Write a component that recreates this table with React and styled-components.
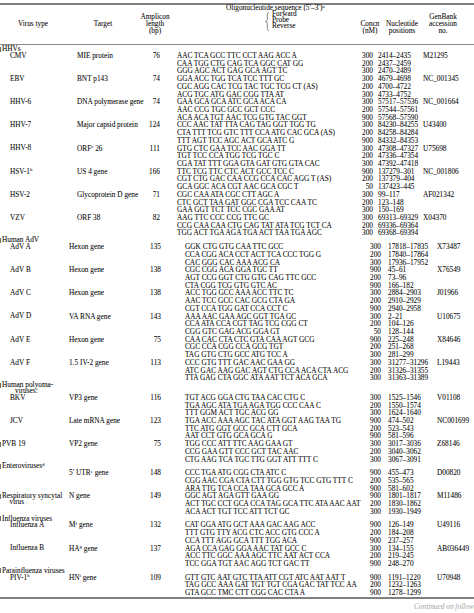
import React from "react";
import styled, { createGlobalStyle, css } from "styled-components";

const Global = createGlobalStyle`
  html, body { margin: 0; padding: 0; background: #fff; }
  body {
    width: 474px;
    height: 613px;
    overflow: hidden;
    font-family: "Liberation Serif", "Times New Roman", serif;
    color: #202020;
  }
`;

const Page = styled.div`
  width: 474px;
  padding-top: 3px;
  font-size: 7.3px;
  white-space: nowrap;
  text-shadow: 0 0 0.4px rgba(0, 0, 0, 0.35);
`;

const TableFrame = styled.div`
  border-top: 2px solid #808080;
  border-bottom: 2px solid #808080;
`;

const Head = styled.div`
  box-sizing: border-box;
  display: grid;
  grid-template-columns: 66px 74px 30px 190px 20px 44px 38px 1fr;
  height: 39.5px;
  padding-bottom: 9px;
  align-items: end;
  border-bottom: 1px solid #8c8c8c;
`;

const HeadCell = styled.div`
  text-align: center;
  line-height: 7.3px;
  ${(p) => p.$single && css`margin-bottom: 7.3px;`}
`;

const OligoCell = styled.div`
  align-self: start;
  display: flex;
  flex-direction: column;
`;

const OligoTitle = styled.div`
  line-height: 6px;
  padding-left: 56px;
`;

const BraceRow = styled.div`
  display: flex;
  align-items: flex-start;
  padding-left: 95px;
  margin-top: -0.5px;
`;

const BraceList = styled.div`
  line-height: 6.4px;
  padding-left: 2px;
`;

const Body = styled.div`
  padding-top: 1.5px;
`;

const Tick = styled.span`
  display: inline-block;
  width: 1px;
  height: 5px;
  margin-right: 1px;
  background: #6f6f6f;
  vertical-align: -0.5px;
`;

const GroupLabel = styled.div`
  line-height: 5.9px;
`;

const Sub = styled.div`
  padding-left: ${(p) => p.$indent}px;
`;

const Row = styled.div`
  display: grid;
  line-height: 7.72px;
  grid-template-columns: ${(p) =>
    p.$wide
      ? "69px 66px 26px 24px 178px 18px 7px 46px 3px 1fr"
      : "77px 58px 25px 17px 178px 18px 5px 43px 2px 1fr"};
`;

const Name = styled.div`
  grid-column: 1;
  line-height: 5.9px;
  padding-top: 0.9px;
  padding-left: ${(p) => (p.$top ? 0 : 10)}px;
`;

const Target = styled.div`
  grid-column: 2;
`;

const Amp = styled.div`
  grid-column: 3;
  text-align: right;
`;

const Seq = styled.div`
  grid-column: 5;
`;

const Conc = styled.div`
  grid-column: 6;
  text-align: right;
`;

const Pos = styled.div`
  grid-column: 8;
`;

const Acc = styled.div`
  grid-column: 10;
`;

const Sup = styled.span`
  font-size: 4.8px;
  position: relative;
  top: -2.4px;
  line-height: 0;
`;

const Continued = styled.div`
  padding-left: 414px;
  margin-top: 4px;
  line-height: 8px;
  font-style: italic;
  color: #a3a3a3;
  text-shadow: none;
`;

const Brace = () => (
  <svg width="5" height="19" viewBox="0 0 5 19" style={{ marginTop: 1 }}>
    <path
      d="M4.2 0.4 C2.8 0.6 2.3 1.4 2.3 2.8 L2.3 7.4 C2.3 8.6 1.6 9.3 0.4 9.5 C1.6 9.7 2.3 10.4 2.3 11.6 L2.3 16.2 C2.3 17.6 2.8 18.4 4.2 18.6"
      fill="none"
      stroke="#555"
      strokeWidth="0.7"
    />
  </svg>
);

const mk = (name, target, amp, seq, conc, pos, acc, top) => ({
  name, target, amp, seq, conc, pos, acc, top,
});

const sections = [
  {
    label: ["HHVs"],
    wide: false,
    rows: [
      mk("CMV", "MIE protein", "76",
        ["AAC TCA GCC TTC CCT AAG ACC A", "CAA TGG CTG CAG TCA GGC CAT GG", "GGG AGC ACT GAG GCA AGT TC"],
        ["300", "200", "300"], ["2414–2435", "2437–2459", "2470–2489"], "M21295"),
      mk("EBV", "BNT p143", "74",
        ["GGA ACC TGG TCA TCC TTT GC", "CGC AGG CAC TCG TAC TGC TCG CT (AS)", "ACG TGC ATG GAC CGG TTA AT"],
        ["300", "200", "300"], ["4679–4698", "4700–4722", "4733–4752"], "NC_001345"),
      mk("HHV-6", "DNA polymerase gene", "74",
        ["GAA GCA GCA ATC GCA ACA CA", "AAC CCG TGC GCC GCT CCC", "ACA ACA TGT AAC TCG GTG TAC GGT"],
        ["300", "200", "900"], ["57517–57536", "57544–57561", "57568–57590"], "NC_001664"),
      mk("HHV-7", "Major capsid protein", "124",
        ["CCC AAC TAT TTA CAG TAG GGT TGG TG", "CTA TTT TCG GTC TTT CCA ATG CAC GCA (AS)", "TTT AGT TCC AGC ACT GCA ATC G"],
        ["300", "200", "900"], ["84230–84255", "84258–84284", "84332–84353"], "U43400"),
      mk("HHV-8", <>ORF<Sup>c</Sup> 26</>, "111",
        ["GTG CTC GAA TCC AAC GGA TT", "TGT TCC CCA TGG TCG TGC C", "CGA TAT TTT GGA GTA GAT GTG GTA CAC"],
        ["300", "200", "300"], ["47308–47327", "47336–47354", "47392–47418"], "U75698"),
      mk(<>HSV-1<Sup>b</Sup></>, "US 4 gene", "166",
        ["TTC TCG TTC CTC ACT GCC TCC C", "CGT CTG GAC CAA CCG CCA CAC AGG T (AS)", "GCA GGC ACA CGT AAC GCA CGC T"],
        ["900", "200", "50"], ["137279–301", "137379–404", "137423–445"], "NC_001806"),
      mk("HSV-2", "Glycoprotein D gene", "71",
        ["CGC CAA ATA CGC CTT AGC A", "CTC GCT TAA GAT GGC CGA TCC CAA TC", "GAA GGT TCT TCC CGC GAA AT"],
        ["300", "200", "300"], ["99–117", "123–148", "150–169"], "AF021342"),
      mk("VZV", "ORF 38", "82",
        ["AAG TTC CCC CCG TTC GC", "CCG CAA CAA CTG CAG TAT ATA TCG TCT CA", "TGG ACT TGA AGA TGA ACT TAA TGA AGC"],
        ["300", "200", "300"], ["69313–69329", "69336–69364", "69368–69394"], "X04370"),
    ],
  },
  {
    label: ["Human AdV"],
    wide: true,
    rows: [
      mk("AdV A", "Hexon gene", "135",
        ["GGK CTG GTG CAA TTC GCC", "CCA CGG ACA CCT ACT TCA CCC TGG G", "CAC GGG CAC AAA ACG CA"],
        ["300", "200", "300"], ["17818–17835", "17840–17864", "17936–17952"], "X73487"),
      mk("AdV B", "Hexon gene", "138",
        ["CGC CGG ACA GGA TGC TT", "AGT CCG GGT CTG GTG CAG TTC GCC", "CTA CGG TCG GTG GTC AC"],
        ["900", "200", "900"], ["45–61", "73–96", "166–182"], "X76549"),
      mk("AdV C", "Hexon gene", "138",
        ["ACC TGG GCC AAA ACC TTC TC", "AAC TCC GCC CAC GCG CTA GA", "CGT CCA TGG GAT CCA CCT C"],
        ["300", "200", "900"], ["2884–2903", "2910–2929", "2940–2958"], "J01966"),
      mk("AdV D", "VA RNA gene", "143",
        ["AAA AAC GAA AGC GGT TGA GC", "CCA ATA CCA CGT TAG TCG CGG CT", "CGG GTC GAG ACG GGA GT"],
        ["300", "200", "50"], ["2–21", "104–126", "128–144"], "U10675"),
      mk("AdV E", "Hexon gene", "75",
        ["CAA CAC CTA CTC GTA CAA AGT GCG", "CGC CCA CGG CCA GCG TGT", "TAG GTG CTG GCC ATG TCC A"],
        ["900", "200", "300"], ["225–248", "251–268", "281–299"], "X84646"),
      mk("AdV F", "1.5 IV-2 gene", "113",
        ["CCC GTG TTT GAC AAC GAA GG", "ATC GAC AAG GAC AGT CTG CCA ACA CTA ACG", "TTA GAG CTA GGC ATA AAT TCT ACA GCA"],
        ["300", "200", "300"], ["31277–31296", "31326–31355", "31363–31389"], "L19443"),
    ],
  },
  {
    label: ["Human polyoma-", "viruses:"],
    wide: true,
    rows: [
      mk("BKV", "VP3 gene", "116",
        ["TGT ACG GGA CTG TAA CAC CTG C", "TGA AGC ATA TGA AGA TGG CCC CAA C", "TTT GGM ACT TGC ACG GG"],
        ["300", "200", "300"], ["1525–1546", "1550–1574", "1624–1640"], "V01108"),
      mk("JCV", "Late mRNA gene", "123",
        ["TGA ACC AAA AGC TAC ATA GGT AAG TAA TG", "TTC ATG GGT GCC GCA CTT GCA", "AAT CCT GTG GCA GCA G"],
        ["900", "200", "900"], ["474–502", "523–543", "581–596"], "NC001699"),
    ],
  },
  {
    label: null,
    wide: true,
    rows: [
      mk(["PVB 19"], "VP2 gene", "75",
        ["TGG CCC ATT TTC AAG GAA GT", "CCG GAA GTT CCC GCT TAC AAC", "CTG AAG TCA TGC TTG GGT ATT TTT C"],
        ["300", "200", "300"], ["3017–3036", "3040–3062", "3067–3091"], "Z68146", true),
    ],
  },
  {
    label: [<>Enteroviruses<Sup>d</Sup></>],
    wide: true,
    rows: [
      mk("", <>5′ UTR<Sup>e</Sup> gene</>, "148",
        ["CCC TGA ATG CGG CTA ATC C", "CGG AAC CGA CTA CTT TGG GTG TCC GTG TTT C", "ARA TTG TCA CCA TAA GCA GCC A"],
        ["900", "200", "900"], ["455–473", "535–565", "581–602"], "D00820"),
    ],
  },
  {
    label: null,
    wide: true,
    rows: [
      mk(["Respiratory syncytal", "virus"], "N gene", "149",
        ["GGC AGT AGA GTT GAA GG", "ACT TGC CCT GCA CCA TAG GCA TTC ATA AAC AAT", "ACA ACT TGT TCC ATT TCT GC"],
        ["900", "200", "300"], ["1801–1817", "1830–1862", "1930–1949"], "M11486", true),
    ],
  },
  {
    label: ["Influenza viruses"],
    wide: true,
    rows: [
      mk("Influenza A", <>M<Sup>f</Sup> gene</>, "132",
        ["CAT GGA ATG GCT AAA GAC AAG ACC", "TTT GTG TTY ACG CTC ACC GTG CCC A", "CCA TTT AGG GCA TTT TGG ACA"],
        ["900", "200", "900"], ["126–149", "184–208", "237–257"], "U49116"),
      mk("Influenza B", <>HA<Sup>g</Sup> gene</>, "137",
        ["AGA CCA GAG GGA AAC TAT GCC C", "ACC TTC GGC AAA AGC TTC AAT ACT CCA", "TCC GGA TGT AAC AGG TCT GAC TT"],
        ["300", "200", "900"], ["134–155", "219–245", "248–270"], "AB036449"),
    ],
  },
  {
    label: ["Parainfluenza viruses"],
    wide: true,
    rows: [
      mk(<>PIV-1<Sup>h</Sup></>, <>HN<Sup>i</Sup> gene</>, "109",
        ["GTT GTC AAT GTC TTA ATT CGT ATC AAT AAT T", "TAG GCC AAA GAT TGT TGT CGA GAC TAT TCC AA", "GTA GCC TMC CTT CGG CAC CTA A"],
        ["900", "200", "900"], ["1191–1220", "1232–1263", "1278–1299"], "U70948"),
    ],
  },
];

const Lines = ({ items }) => items.map((t, i) => <div key={i}>{t}</div>);

const TopLabel = ({ lines, indent }) => (
  <>
    <div>
      <Tick />
      {lines[0]}
    </div>
    {lines.slice(1).map((l, i) => (
      <Sub key={i} $indent={indent}>
        {l}
      </Sub>
    ))}
  </>
);

export default function App() {
  return (
    <>
      <Global />
      <Page>
        <TableFrame>
          <Head>
            <HeadCell $single>Virus type</HeadCell>
            <HeadCell $single>Target</HeadCell>
            <HeadCell>
              Amplicon
              <br />
              length
              <br />
              (bp)
            </HeadCell>
            <OligoCell>
              <OligoTitle>
                Oligonucleotide sequence (5′–3′)<Sup>a</Sup>
              </OligoTitle>
              <BraceRow>
                <Brace />
                <BraceList>
                  <div>Forward</div>
                  <div>Probe</div>
                  <div>Reverse</div>
                </BraceList>
              </BraceRow>
            </OligoCell>
            <HeadCell>
              Concn
              <br />
              (nM)
            </HeadCell>
            <HeadCell>
              Nucleotide
              <br />
              positions
            </HeadCell>
            <HeadCell>
              GenBank
              <br />
              accession
              <br />
              no.
            </HeadCell>
          </Head>
          <Body>
            {sections.map((s, si) => (
              <div key={si}>
                {s.label && (
                  <GroupLabel>
                    <TopLabel lines={s.label} indent={15} />
                  </GroupLabel>
                )}
                {s.rows.map((r, ri) => (
                  <Row key={ri} $wide={s.wide}>
                    <Name $top={r.top}>
                      {r.top ? <TopLabel lines={r.name} indent={9.5} /> : r.name}
                    </Name>
                    <Target>{r.target}</Target>
                    <Amp>{r.amp}</Amp>
                    <Seq>
                      <Lines items={r.seq} />
                    </Seq>
                    <Conc>
                      <Lines items={r.conc} />
                    </Conc>
                    <Pos>
                      <Lines items={r.pos} />
                    </Pos>
                    <Acc>{r.acc}</Acc>
                  </Row>
                ))}
              </div>
            ))}
          </Body>
        </TableFrame>
        <Continued>Continued on following page</Continued>
      </Page>
    </>
  );
}
